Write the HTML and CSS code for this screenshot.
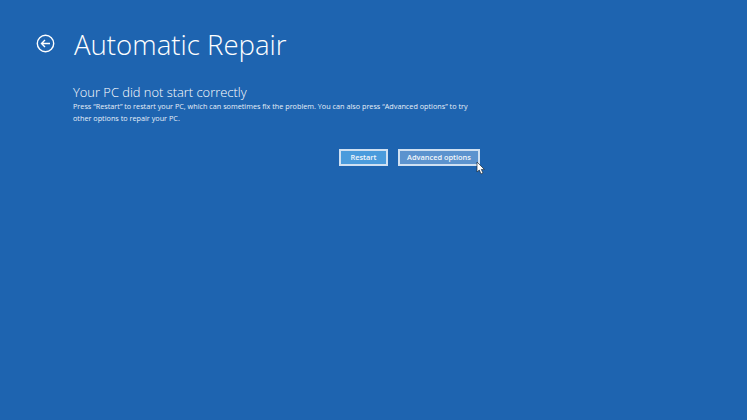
FILE: index.html
```html
<!DOCTYPE html>
<html>
<head>
  <title>Automatic Repair</title>
  <link rel="stylesheet" href="styles.css">
</head>
<body>
<section class="screen">
  <header class="top">
    <svg class="back" width="19" height="19" viewBox="0 0 19 19">
      <circle cx="9.5" cy="9.5" r="8.2" fill="none" stroke="#fff" stroke-width="1.4"/>
      <path d="M14 9.5H5.5M9 6L5.5 9.5L9 13" fill="none" stroke="#fff" stroke-width="1.4"/>
    </svg>
    <h1>Automatic Repair</h1>
  </header>
  <div class="content">
    <h2>Your PC did not start correctly</h2>
    <p>Press “Restart” to restart your PC, which can sometimes fix the problem. You can also press “Advanced options” to try other options to repair your PC.</p>
    <div class="actions">
      <button class="btn btn-light">Restart</button>
      <button class="btn btn-hover">Advanced options
        <svg class="cursor" width="10" height="14" viewBox="0 0 10 14">
          <path d="M1 1V11L3.3 9L5 13L7 12L5.3 8.4H8.4Z" fill="#fff" stroke="#1c2b3a" stroke-width="0.7"/>
        </svg>
      </button>
    </div>
  </div>
</section>
</body>
</html>
```

FILE: styles.css
```css
html, body {
  margin: 0;
  height: 100%;
  overflow: hidden;
}

body {
  background: #1e64b0;
  color: #fff;
  font-family: "Open Sans", "Noto Sans", sans-serif;
}

.screen {
  padding: 23px 0 0 36px;
}

.top {
  display: flex;
  align-items: center;
  gap: 19px;
}

.back {
  flex: none;
  margin-top: -2px;
}

h1 {
  margin: 0;
  font-size: 27.6px;
  font-weight: 300;
  line-height: 42px;
}

.content {
  width: 407px;
  margin: 19px 0 0 37px;
}

h2 {
  margin: 0;
  font-size: 12.9px;
  font-weight: 300;
  line-height: 16px;
}

p {
  width: 400px;
  margin: 0;
  font-size: 7.25px;
  line-height: 12px;
  color: #e8f0f9;
}

.actions {
  display: flex;
  justify-content: flex-end;
  gap: 10px;
  margin-top: 25px;
}

.btn {
  position: relative;
  height: 17px;
  padding: 0 0 2px;
  border: 2px solid #cfe0f2;
  color: #f2f7fc;
  font-family: inherit;
  font-size: 7.4px;
  font-weight: 600;
}

.btn-light {
  width: 49px;
  background: #4a9bdc;
}

.btn-hover {
  width: 82px;
  background: #5c93ce;
}

.cursor {
  position: absolute;
  left: 76px;
  top: 10px;
}
```
